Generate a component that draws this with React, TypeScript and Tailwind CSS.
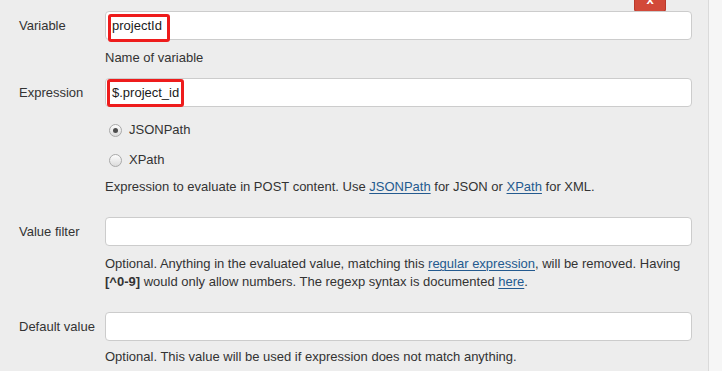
import React from 'react';

const Radio: React.FC<{ checked?: boolean; label: string }> = ({ checked, label }) => (
  <label className="flex items-center h-[18px]">
    <span className="w-[13px] h-[13px] rounded-full border border-[#a9a9a9] bg-gradient-to-b from-[#fdfdfd] to-[#dcdcdc] flex items-center justify-center shrink-0 ml-[4px]">
      {checked && <span className="w-[5px] h-[5px] rounded-full bg-[#4d4d4d]" />}
    </span>
    <span className="ml-[7px]">{label}</span>
  </label>
);

const Field: React.FC<{ label: string; value?: string; mark?: string; top: string }> = ({ label, value, mark, top }) => (
  <div className={`flex items-center ${top}`}>
    <div className="w-[105px] pl-[19px] shrink-0">{label}</div>
    <div className="relative w-[587px] h-[29px] bg-white border border-[#cccccc] rounded-[4px] flex items-center pl-[6px] text-[#1a1a1a]">
      {value}
      {mark && <div className={`absolute border-[3px] border-[#ee1c1c] rounded-[3px] ${mark}`} />}
    </div>
  </div>
);

const Link: React.FC<{ children: React.ReactNode }> = ({ children }) => (
  <a className="text-[#245a8f] underline underline-offset-2 decoration-[1px]">{children}</a>
);

export default function App() {
  return (
    <div className="w-[722px] h-[371px] overflow-hidden flex bg-[#f6f6f6] text-[13px] leading-[18px] text-[#333333] font-['Liberation_Sans',Arial,sans-serif]">
      <div className="relative w-[709px] h-full bg-[#ededed] border-r border-[#dadada] shrink-0">
        <div className="absolute left-[634px] top-0 w-[32px] h-[12px] bg-[#d24939] border border-t-0 border-[#b9392b] rounded-b-[3px] overflow-hidden flex justify-center">
          <span className="text-white font-bold text-[13px] leading-[10px] -mt-[5px]">x</span>
        </div>

        <Field label="Variable" value="projectId" mark="left-[2px] top-[2px] bottom-[-3px] w-[62px]" top="mt-[11px]" />
        <div className="pl-[105px] mt-[9px]">Name of variable</div>

        <Field label="Expression" value="$.project_id" mark="left-[1px] top-0 bottom-[-1px] w-[77px]" top="mt-[11px]" />
        <div className="pl-[105px] mt-[14px]">
          <Radio checked label="JSONPath" />
          <div className="mt-[12px]">
            <Radio label="XPath" />
          </div>
          <div className="mt-[9px]">
            Expression to evaluate in POST content. Use <Link>JSONPath</Link> for JSON or <Link>XPath</Link> for XML.
          </div>
        </div>

        <Field label="Value filter" top="mt-[21px]" />
        <div className="pl-[105px] pr-[20px] mt-[9px]">
          Optional. Anything in the evaluated value, matching this <Link>regular expression</Link>, will be removed. Having{' '}
          <b>[^0-9]</b> would only allow numbers. The regexp syntax is documented <Link>here</Link>.
        </div>

        <Field label="Default value" top="mt-[21px]" />
        <div className="pl-[105px] mt-[7px]">Optional. This value will be used if expression does not match anything.</div>
      </div>
    </div>
  );
}
